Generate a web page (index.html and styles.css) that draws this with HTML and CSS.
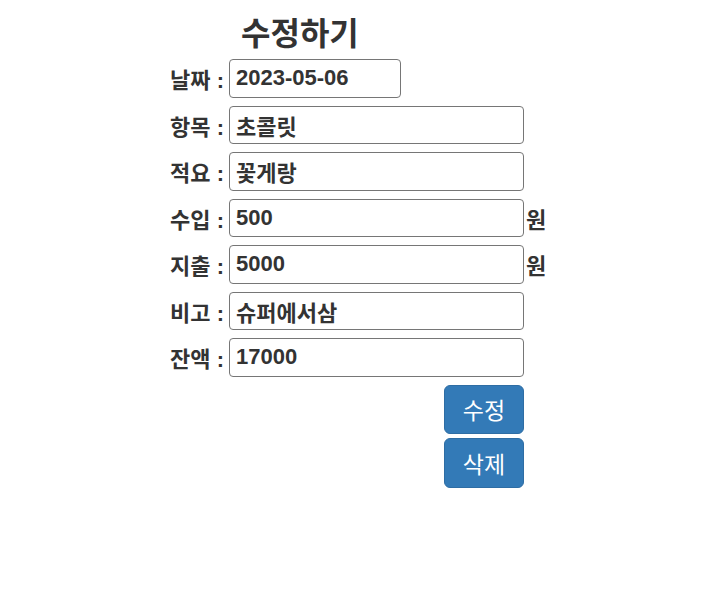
FILE: index.html
```html
<!DOCTYPE html>
<html lang="ko">
<head>
<meta charset="utf-8">
<title>수정하기</title>
<link rel="stylesheet" href="styles.css">
</head>
<body>
<div class="page">
  <h1 class="title">수정하기</h1>
  <form class="form">
    <div class="row"><label class="label">날짜 :</label><input class="field field-date" type="text" value="2023-05-06"></div>
    <div class="row"><label class="label">항목 :</label><input class="field" type="text" value="초콜릿"></div>
    <div class="row"><label class="label">적요 :</label><input class="field" type="text" value="꽃게랑"></div>
    <div class="row"><label class="label">수입 :</label><input class="field" type="text" value="500"><span class="unit">원</span></div>
    <div class="row"><label class="label">지출 :</label><input class="field" type="text" value="5000"><span class="unit">원</span></div>
    <div class="row"><label class="label">비고 :</label><input class="field" type="text" value="슈퍼에서삼"></div>
    <div class="row"><label class="label">잔액 :</label><input class="field" type="text" value="17000"></div>
    <div class="actions">
      <button class="btn" type="button">수정</button>
      <button class="btn" type="button">삭제</button>
    </div>
  </form>
</div>
</body>
</html>
```
FILE: styles.css
```css
html, body {
  margin: 0;
  padding: 0;
  background: #fff;
}
body {
  font-family: "Liberation Sans", Arial, "Noto Sans CJK KR", sans-serif;
  color: #333;
}
.page {
  padding-top: 15px;
  padding-left: 150px;
}
.title {
  margin: 0 0 6px 91px;
  font-size: 32px;
  line-height: 38px;
  font-weight: bold;
  color: #333;
}
.form {
  display: flex;
  flex-direction: column;
  gap: 8px;
  margin: 0;
}
.row {
  display: flex;
  align-items: center;
  height: 38.5px;
}
.label {
  width: 74px;
  text-align: right;
  font-size: 22px;
  font-weight: bold;
  margin-right: 5px;
  white-space: nowrap;
}
.field {
  box-sizing: border-box;
  width: 295px;
  height: 38.5px;
  border: 1px solid #767676;
  border-radius: 4px;
  padding: 0 6px;
  font-family: "Liberation Sans", Arial, "Noto Sans CJK KR", sans-serif;
  font-size: 22px;
  font-weight: bold;
  color: #333;
  background: #fff;
}
.field-date {
  width: 172px;
}
.unit {
  margin-left: 2px;
  font-size: 22px;
  font-weight: bold;
}
.actions {
  display: flex;
  flex-direction: column;
  align-items: flex-end;
  gap: 4px;
  width: 374px;
}
.btn {
  box-sizing: border-box;
  width: 80px;
  height: 49.5px;
  background: #337ab7;
  border: 1px solid #2e6da4;
  border-radius: 6px;
  color: #fff;
  font-family: "Liberation Sans", Arial, "Noto Sans CJK KR", sans-serif;
  font-size: 23px;
  padding: 0;
}
```
